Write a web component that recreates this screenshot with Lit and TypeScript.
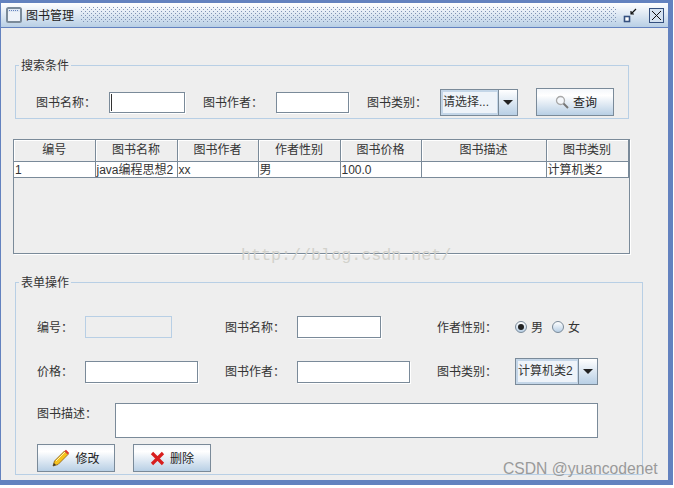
import { LitElement, html, css } from "lit";
import { customElement } from "lit/decorators.js";

@customElement("app-root")
export class AppRoot extends LitElement {
  static styles = css`
    :host { display: block; width: 673px; height: 485px; font-family: "Liberation Sans", "Noto Sans CJK SC", sans-serif; font-size: 12px; color: #333; }
    * { box-sizing: border-box; }
    .win { position: relative; width: 673px; height: 485px; background: #6382bf; padding: 3px 5px 5px 1px; overflow: hidden; }
    .title { height: 25px; border-bottom: 1px solid #6382bf; background: linear-gradient(#ffffff 0%, #eef3f9 25%, #b8cfe5 100%); display: flex; align-items: center; padding-left: 5px; }
    .title .name { margin-left: 4px; width: 55px; color: #222; padding-bottom: 2px; flex: none; }
    .dots { flex: 1; height: 16px; margin-right: 5px; min-width: 0; }
    .btns { display: flex; align-items: center; gap: 12px; width: 47px; padding-left: 2px; flex: none; }
    .content { background: #eeeeee; height: 452px; padding: 30px 0 0 14px; }
    fieldset { margin: 0; padding: 0; border: 1px solid #b8cfe5; position: relative; min-width: 0; }
    legend { padding: 0 2px 0 2px; margin-left: 3px; line-height: 16px; height: 14px; color: #333; }
    .search { width: 614px; height: 61px; }
    .search .row { display: flex; align-items: center; height: 28px; margin: 16px 0 0 20px; }
    .lbl { flex: none; white-space: nowrap; padding-bottom: 2px; }
    .tf { display: block; flex: none; background: #fff; border: 1px solid #7a8a99; box-shadow: 1px 1px 0 #fff; }
    .caret { width: 1px; height: 17px; background: #333; margin: 1px 0 0 1px; }
    .combo { flex: none; display: flex; height: 27px; border: 1px solid #7a8a99; background: #fff; }
    .combo .val { flex: 1; border: 2px solid #c4d6e8; background: #eef3f9; line-height: 21px; white-space: nowrap; overflow: hidden; color: #333; border-right-width: 1px; }
    .combo .arr { width: 19px; border-left: 1px solid #7a8a99; background: linear-gradient(#ffffff, #b8cfe5); display: flex; align-items: center; justify-content: center; }
    .tri { width: 0; height: 0; border-left: 5.5px solid transparent; border-right: 5.5px solid transparent; border-top: 5px solid #222; }
    .btn { flex: none; height: 28px; width: 78px; border: 1px solid #7a8a99; background: linear-gradient(#f4f7fb 0%, #ffffff 25%, #b8cfe5 100%); display: flex; align-items: center; justify-content: center; gap: 5px; color: #222; }
    .btn span { padding-bottom: 1px; }
    .btn.find { padding-left: 2px; gap: 4px; }
    .tablewrap { width: 617px; height: 115px; margin: 20px 0 0 -2px; border: 1px solid #7a8a99; box-shadow: 1px 1px 0 #fff; }
    table { border-collapse: collapse; table-layout: fixed; width: 614px; }
    th { height: 21px; padding: 1px 0 0; font-weight: 400; text-align: center; background: #eeeeee; border-right: 1px solid #7a8a99; border-bottom: 1px solid #7a8a99; line-height: 19px; color: #333; box-shadow: inset 1px 1px 0 #fff; }
    td { height: 16px; padding: 1px 0 0 1px; background: #fff; border-right: 1px solid #7a8a99; border-bottom: 1px solid #7a8a99; line-height: 14px; white-space: nowrap; overflow: hidden; color: #333; }
    .form { width: 628px; height: 200px; margin: 21px 0 0 0; }
    .form .r { display: flex; align-items: center; margin-left: 21px; }
    .r1 { margin-top: 27px; height: 22px; }
    .r2 { margin-top: 20px; height: 27px; }
    .r3 { margin-top: 18px; height: 35px; align-items: flex-start !important; }
    .r4 { margin-top: 6px; height: 28px; gap: 18px; }
    .tf.dis { background: transparent; border-color: #b8cfe5; box-shadow: none; }
    .ta { display: block; flex: none; height: 35px; width: 483px; background: #fff; border: 1px solid #7a8a99; }
    .radio { flex: none; width: 12px; height: 12px; border-radius: 50%; border: 1px solid #7a8a99; background: linear-gradient(#ffffff, #b8cfe5); display: flex; align-items: center; justify-content: center; }
    .radio i { width: 6px; height: 6px; border-radius: 50%; background: #222; }
    .wdesc { width: 78px; line-height: 22px; }
    .wm1 { position: absolute; left: 241px; top: 246px; font-family: "Liberation Mono", monospace; font-size: 16.7px; color: #d2d2cc; white-space: nowrap; line-height: 20px; }
    .wm2 { position: absolute; left: 503px; top: 460px; font-family: "Liberation Sans", sans-serif; font-size: 15.7px; color: #9a9a9a; white-space: nowrap; line-height: 18px; }
    svg { display: block; flex: none; }
  `;

  private tf(w: number, h = 22, cls = "", inner: unknown = "") {
    return html`<div class="tf ${cls}" style="width:${w}px;height:${h}px">${inner}</div>`;
  }
  private lbl(t: string, w: number) {
    return html`<span class="lbl" style="width:${w}px">${t}</span>`;
  }
  private combo(t: string, w: number) {
    return html`<div class="combo" style="width:${w}px"><div class="val">${t}</div><div class="arr"><div class="tri"></div></div></div>`;
  }

  render() {
    const cols = [81, 82, 81, 82, 81, 125, 82];
    const heads = ["编号", "图书名称", "图书作者", "作者性别", "图书价格", "图书描述", "图书类别"];
    const cells = ["1", "java编程思想2", "xx", "男", "100.0", "", "计算机类2"];
    return html`
      <div class="win">
        <div class="title">
          <svg width="16" height="16" viewBox="0 0 16 16"><rect x="1" y="1" width="14" height="14" rx="1.5" fill="#eef3f9" stroke="#7a8a99" stroke-width="2"/><rect x="2" y="2" width="12" height="3" fill="#dfe8f3"/><path d="M3 3.5h10" stroke="#6382bf" stroke-dasharray="1 1"/></svg>
          <span class="name">图书管理</span>
          <svg class="dots" width="535" height="16" shape-rendering="crispEdges">
            <defs><pattern id="dp" width="4" height="4" patternUnits="userSpaceOnUse"><rect x="0" y="0" width="1" height="1" fill="#7f93b4"/><rect x="2" y="2" width="1" height="1" fill="#7f93b4"/></pattern></defs>
            <rect width="100%" height="100%" fill="url(#dp)"/>
          </svg>
          <div class="btns">
            <svg width="14" height="15" viewBox="0 0 14 15"><path d="M13 1 8 6M8 3v3h3" fill="none" stroke="#111" stroke-width="1.2"/><rect x="1.5" y="8.5" width="5" height="5" fill="#fff" stroke="#34507f" stroke-width="1.6"/></svg>
            <svg width="15" height="15" viewBox="0 0 15 15"><rect x=".5" y=".5" width="14" height="14" fill="#d5e2f0" stroke="#34507f"/><path d="M3 3l9 9M12 3l-9 9" stroke="#111" fill="none"/></svg>
          </div>
        </div>
        <div class="content">
          <fieldset class="search">
            <legend>搜索条件</legend>
            <div class="row">
              ${this.lbl("图书名称：", 73)}
              ${this.tf(76, 21, "", html`<div class="caret"></div>`)}
              <span style="width:18px"></span>
              ${this.lbl("图书作者：", 73)}
              ${this.tf(73, 21)}
              <span style="width:18px"></span>
              ${this.lbl("图书类别：", 73)}
              ${this.combo("请选择...", 78)}
              <span style="width:18px"></span>
              <div class="btn find">
                <svg width="14" height="14" viewBox="0 0 14 14"><circle cx="5.5" cy="5.5" r="4" fill="#f4f7fb" stroke="#a8a8a8" stroke-width="1.3"/><path d="M8.5 8.5 13 13" stroke="#777" stroke-width="2"/></svg>
                <span>查询</span>
              </div>
            </div>
          </fieldset>
          <div class="tablewrap">
            <table>
              <colgroup>${cols.map((w) => html`<col style="width:${w}px" />`)}</colgroup>
              <tr>${heads.map((h) => html`<th>${h}</th>`)}</tr>
              <tr>${cells.map((c) => html`<td>${c}</td>`)}</tr>
            </table>
          </div>
          <fieldset class="form">
            <legend>表单操作</legend>
            <div class="r r1">
              ${this.lbl("编号：", 48)}
              ${this.tf(87, 22, "dis")}
              <span style="width:53px"></span>
              ${this.lbl("图书名称：", 72)}
              ${this.tf(84)}
              <span style="width:56px"></span>
              ${this.lbl("作者性别：", 78)}
              <div class="radio"><i></i></div>
              <span class="lbl" style="margin:0 9px 0 4px">男</span>
              <div class="radio"></div>
              <span class="lbl" style="margin-left:4px">女</span>
            </div>
            <div class="r r2">
              ${this.lbl("价格：", 48)}
              ${this.tf(113)}
              <span style="width:27px"></span>
              ${this.lbl("图书作者：", 72)}
              ${this.tf(113)}
              <span style="width:27px"></span>
              ${this.lbl("图书类别：", 78)}
              ${this.combo("计算机类2", 83)}
            </div>
            <div class="r r3">
              <span class="lbl wdesc">图书描述：</span>
              <div class="ta"></div>
            </div>
            <div class="r r4">
              <div class="btn">
                <svg width="18" height="18" viewBox="0 0 18 18"><path d="M1 17l1.5-5L12.5 2 16 5.5 6 15.5z" fill="#f6c21c" stroke="#8a5a10" stroke-width=".8"/><path d="M12.5 2 14 .8 17.2 4 16 5.5z" fill="#e0342c"/><path d="M1 17l.9-3 2.1 2.1z" fill="#333"/><path d="M4 12 13 3" stroke="#fff3b0"/></svg>
                <span>修改</span>
              </div>
              <div class="btn">
                <svg width="15" height="15" viewBox="0 0 15 15"><path d="M2 2l11 11M13 2 2 13" stroke="#d81e1e" stroke-width="3.2"/></svg>
                <span>删除</span>
              </div>
            </div>
          </fieldset>
        </div>
        <div class="wm1">http://blog.csdn.net/</div>
        <div class="wm2">CSDN @yuancodenet</div>
      </div>
    `;
  }
}
